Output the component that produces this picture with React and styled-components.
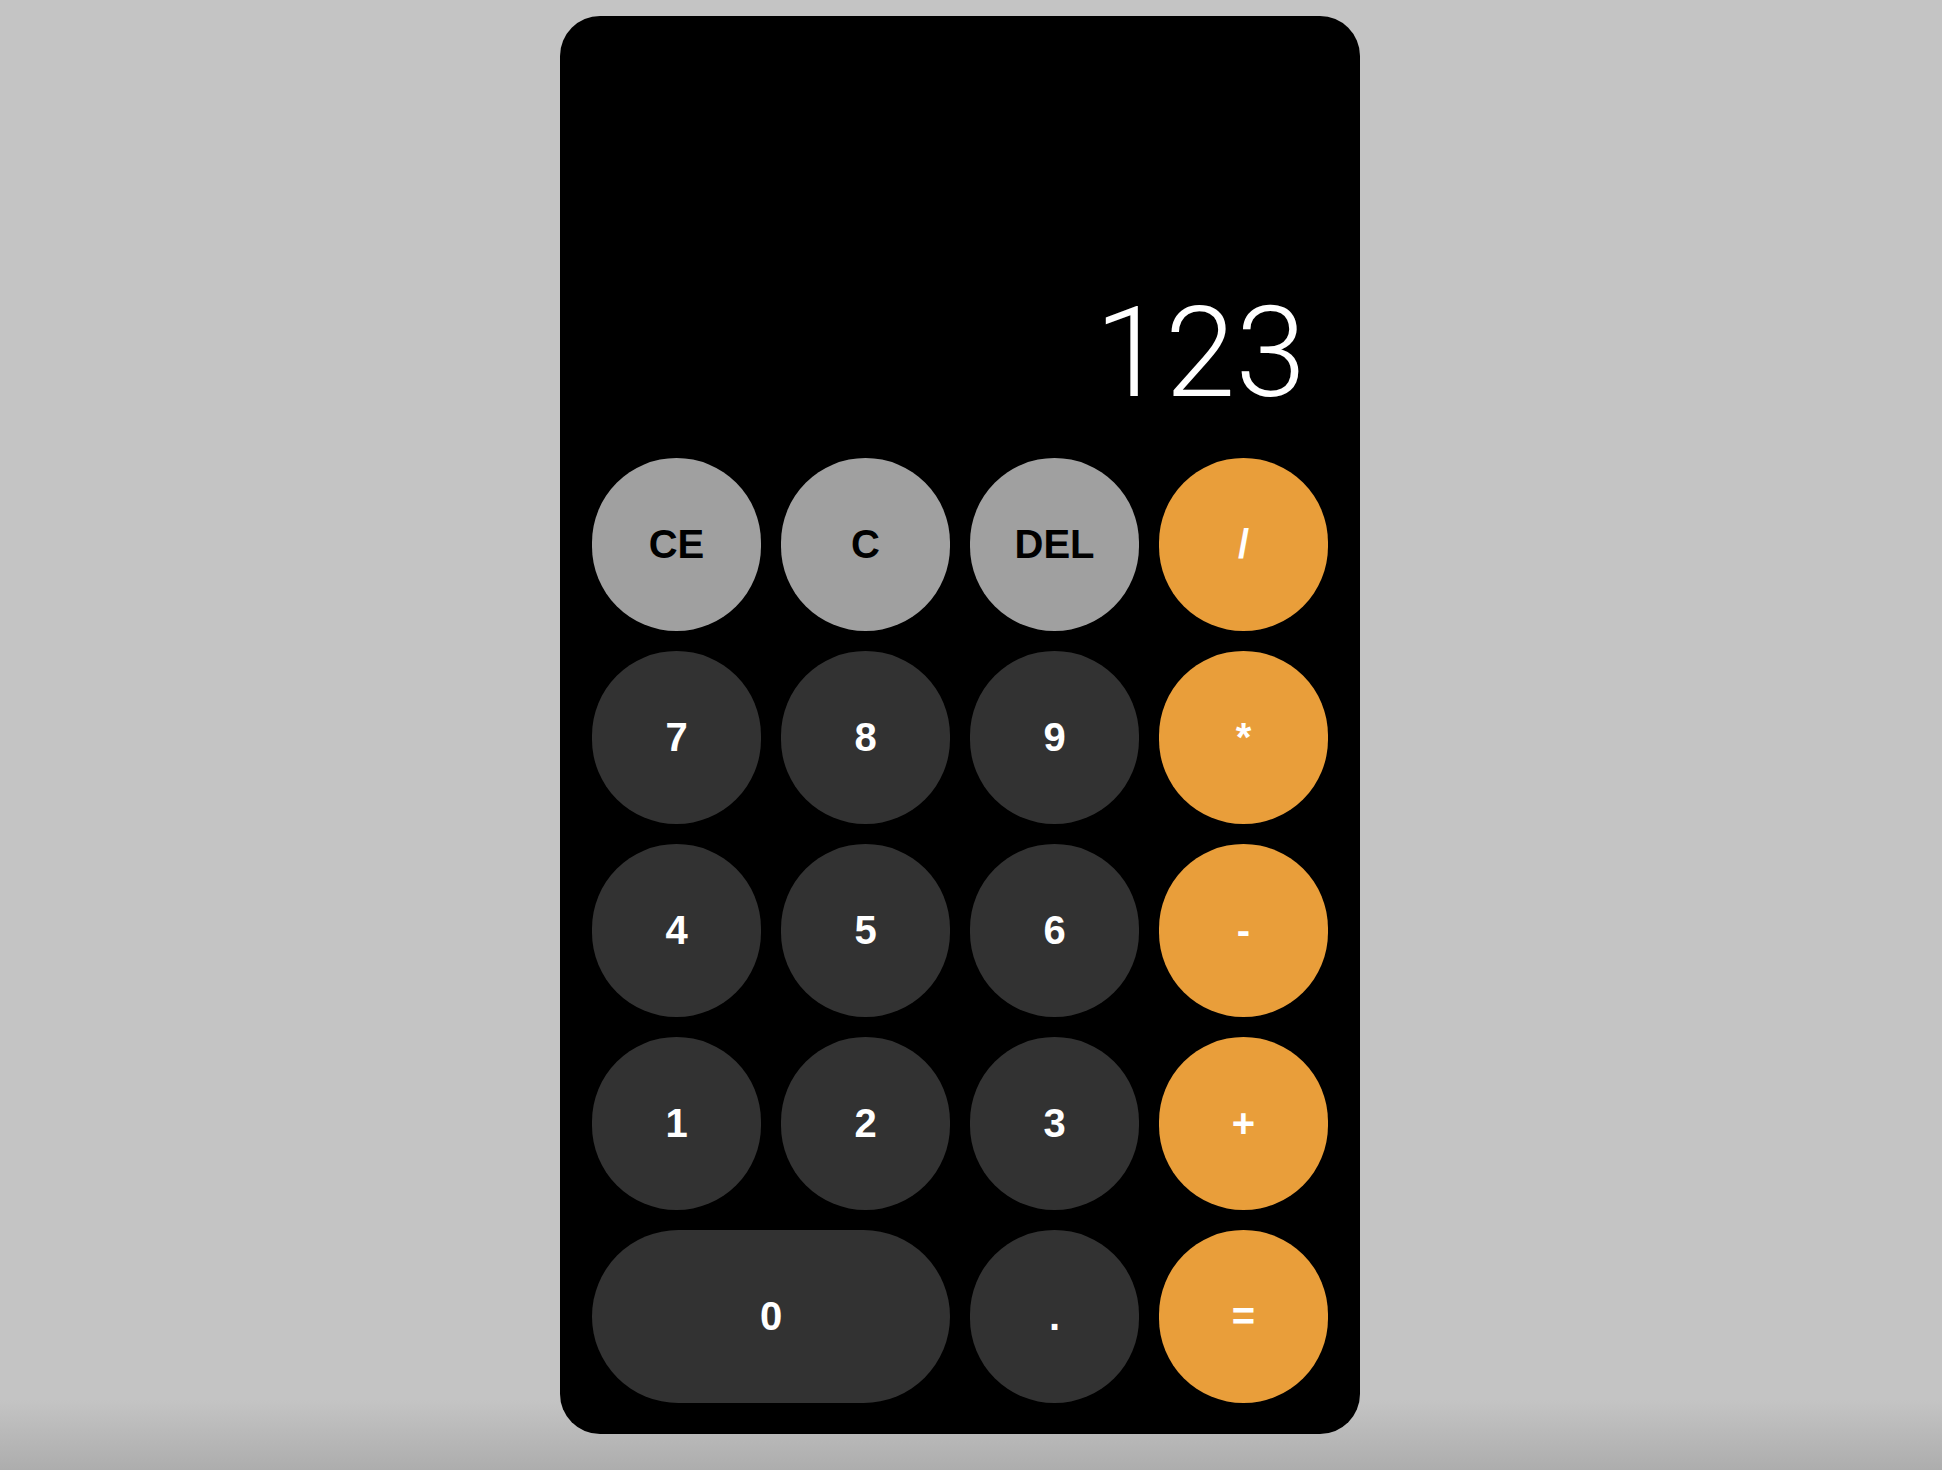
import React, { useState } from "react";
import styled, { createGlobalStyle } from "styled-components";

const KEYS = [
  { label: "CE", kind: "func" },
  { label: "C", kind: "func" },
  { label: "DEL", kind: "func" },
  { label: "/", kind: "op" },
  { label: "7", kind: "num" },
  { label: "8", kind: "num" },
  { label: "9", kind: "num" },
  { label: "*", kind: "op" },
  { label: "4", kind: "num" },
  { label: "5", kind: "num" },
  { label: "6", kind: "num" },
  { label: "-", kind: "op" },
  { label: "1", kind: "num" },
  { label: "2", kind: "num" },
  { label: "3", kind: "num" },
  { label: "+", kind: "op" },
  { label: "0", kind: "num", wide: true },
  { label: ".", kind: "num" },
  { label: "=", kind: "op" },
];

const COLORS = {
  func: { bg: "#a0a0a0", fg: "#000000" },
  num: { bg: "#323232", fg: "#ffffff" },
  op: { bg: "#e99e3a", fg: "#ffffff" },
};

function App() {
  const [value, setValue] = useState("123");

  const press = (key) => {
    if (key === "C" || key === "CE") return setValue("0");
    if (key === "DEL") return setValue((v) => (v.length > 1 ? v.slice(0, -1) : "0"));
    if (key === "=") {
      try {
        // eslint-disable-next-line no-new-func
        setValue(String(Function(`return (${value})`)()));
      } catch (e) {
        setValue("Error");
      }
      return;
    }
    setValue((v) => (v === "0" ? key : v + key));
  };

  return (
    <>
      <GlobalStyle />
      <Page>
        <Calculator>
          <Display>
            <Result>{value}</Result>
          </Display>
          <Keypad>
            {KEYS.map((k) => (
              <Key key={k.label} kind={k.kind} wide={k.wide} onClick={() => press(k.label)}>
                {k.label}
              </Key>
            ))}
          </Keypad>
        </Calculator>
      </Page>
    </>
  );
}

const GlobalStyle = createGlobalStyle`
  html, body {
    margin: 0;
    padding: 0;
  }

  body {
    min-height: 100vh;
    background: linear-gradient(
      to bottom,
      #c4c4c4 0,
      #c4c4c4 calc(100% - 70px),
      #adadad 100%
    );
    font-family: "Liberation Sans", Arial, sans-serif;
  }
`;

const Page = styled.div`
  display: flex;
  justify-content: center;
  padding: 16px 22px 0 0;
`;

const Calculator = styled.div`
  display: flex;
  flex-direction: column;
  box-sizing: border-box;
  width: 800px;
  height: 1418px;
  padding: 0 32px 31px;
  background-color: #000;
  border-radius: 40px;
`;

const Display = styled.div`
  flex: 1;
  display: flex;
  align-items: flex-end;
  justify-content: flex-end;
  padding: 0 22px 42px 0;
`;

const Result = styled.div`
  color: #fff;
  font-family: "Helvetica Neue", Roboto, "Liberation Sans", sans-serif;
  font-weight: 300;
  font-size: 127px;
  line-height: 1;
`;

const Keypad = styled.div`
  display: grid;
  grid-template-columns: repeat(4, 1fr);
  grid-auto-rows: 173px;
  gap: 20px;
`;

const Key = styled.button.withConfig({
  shouldForwardProp: (prop) => !["kind", "wide"].includes(prop),
})`
  grid-column: ${({ wide }) => (wide ? "span 2" : "auto")};
  border: none;
  border-radius: 100px;
  padding: 0;
  outline: none;
  background-color: ${({ kind }) => COLORS[kind].bg};
  color: ${({ kind }) => COLORS[kind].fg};
  font-family: "Liberation Sans", Arial, sans-serif;
  font-weight: 700;
  font-size: 40px;
  cursor: pointer;

  &:active {
    filter: brightness(1.2);
  }
`;

export default App;
